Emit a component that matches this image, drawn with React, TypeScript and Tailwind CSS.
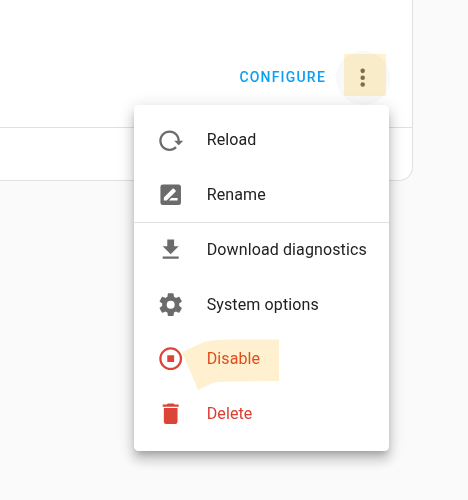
import { clsx } from "clsx";

const icons = {
  reload:
    "M2 12C2 16.97 6.03 21 11 21C13.39 21 15.68 20.06 17.4 18.4L15.9 16.9C14.63 18.25 12.86 19 11 19C4.76 19 1.64 11.46 6.05 7.05C10.46 2.64 18 5.77 18 12H15L19 16H19.1L23 12H20C20 7.03 15.97 3 11 3C6.03 3 2 7.03 2 12Z",
  rename:
    "M18,17H10.5L12.5,15H18M6,17V14.5L13.88,6.65C14.07,6.45 14.39,6.45 14.59,6.65L16.35,8.41C16.55,8.61 16.55,8.92 16.35,9.12L8.47,17M19,3H5C3.89,3 3,3.89 3,5V19A2,2 0 0,0 5,21H19A2,2 0 0,0 21,19V5C21,3.89 20.1,3 19,3Z",
  download: "M5,20H19V18H5M19,9H15V3H9V9H5L12,16L19,9Z",
  cog: "M12,15.5A3.5,3.5 0 0,1 8.5,12A3.5,3.5 0 0,1 12,8.5A3.5,3.5 0 0,1 15.5,12A3.5,3.5 0 0,1 12,15.5M19.43,12.97C19.47,12.65 19.5,12.33 19.5,12C19.5,11.67 19.47,11.34 19.43,11L21.54,9.37C21.73,9.22 21.78,8.95 21.66,8.73L19.66,5.27C19.54,5.05 19.27,4.96 19.05,5.05L16.56,6.05C16.04,5.66 15.5,5.32 14.87,5.07L14.5,2.42C14.46,2.18 14.25,2 14,2H10C9.75,2 9.54,2.18 9.5,2.42L9.13,5.07C8.5,5.32 7.96,5.66 7.44,6.05L4.95,5.05C4.73,4.96 4.46,5.05 4.34,5.27L2.34,8.73C2.21,8.95 2.27,9.22 2.46,9.37L4.57,11C4.53,11.34 4.5,11.67 4.5,12C4.5,12.33 4.53,12.65 4.57,12.97L2.46,14.63C2.27,14.78 2.21,15.05 2.34,15.27L4.34,18.73C4.46,18.95 4.73,19.03 4.95,18.95L7.44,17.94C7.96,18.34 8.5,18.68 9.13,18.93L9.5,21.58C9.54,21.82 9.75,22 10,22H14C14.25,22 14.46,21.82 14.5,21.58L14.87,18.93C15.5,18.67 16.04,18.34 16.56,17.94L19.05,18.95C19.27,19.03 19.54,18.95 19.66,18.73L21.66,15.27C21.78,15.05 21.73,14.78 21.54,14.63L19.43,12.97Z",
  stop: "M12,2A10,10 0 0,0 2,12A10,10 0 0,0 12,22A10,10 0 0,0 22,12A10,10 0 0,0 12,2M12,4C16.41,4 20,7.59 20,12C20,16.41 16.41,20 12,20C7.59,20 4,16.41 4,12C4,7.59 7.59,4 12,4M9,9V15H15V9",
  trash:
    "M19,4H15.5L14.5,3H9.5L8.5,4H5V6H19M6,19A2,2 0 0,0 8,21H16A2,2 0 0,0 18,19V7H6V19Z",
  dots: "M12,16A2,2 0 0,1 14,18A2,2 0 0,1 12,20A2,2 0 0,1 10,18A2,2 0 0,1 12,16M12,10A2,2 0 0,1 14,12A2,2 0 0,1 12,14A2,2 0 0,1 10,12A2,2 0 0,1 12,10M12,4A2,2 0 0,1 14,6A2,2 0 0,1 12,8A2,2 0 0,1 10,6A2,2 0 0,1 12,4Z",
};

function Icon({ path, className }: { path: string; className?: string }) {
  return (
    <svg viewBox="0 0 24 24" fill="currentColor" className={clsx("size-[27.4px] shrink-0", className)}>
      <path d={path} />
    </svg>
  );
}

interface MenuItemProps {
  icon: keyof typeof icons;
  label: string;
  danger?: boolean;
  highlighted?: boolean;
}

function MenuItem({ icon, label, danger, highlighted }: MenuItemProps) {
  return (
    <button
      className={clsx(
        "flex h-[54.6px] w-full items-center gap-[22.7px] pl-[22.6px] text-left",
        highlighted ? "text-[#e0501f]" : danger ? "text-[#db3c30]" : "text-[#212121]",
      )}
    >
      <Icon path={icons[icon]} className={danger ? "text-[#db4437]" : "text-[#6b6b6b]"} />
      <span className="text-[16px] leading-6 tracking-[0.12px] whitespace-nowrap">{label}</span>
    </button>
  );
}

function Menu() {
  return (
    <div className="absolute top-[104.5px] left-[134px] h-[346px] w-[255.3px] rounded-[4.5px] bg-white pt-[8.5px] shadow-[0_5px_6px_-3px_rgba(0,0,0,0.2),0_9px_11px_1px_rgba(0,0,0,0.14),0_3px_16px_2px_rgba(0,0,0,0.12)]">
      <MenuItem icon="reload" label="Reload" />
      <MenuItem icon="rename" label="Rename" />
      <div className="-mb-[0.5px] h-px bg-[#e0e0e0]" />
      <MenuItem icon="download" label="Download diagnostics" />
      <MenuItem icon="cog" label="System options" />
      <MenuItem icon="stop" label="Disable" danger highlighted />
      <MenuItem icon="trash" label="Delete" danger />
      {/* marker stroke over "Disable" */}
      <svg
        viewBox="0 0 98 52"
        className="pointer-events-none absolute top-[233.5px] left-[48px] h-[52px] w-[98px] text-[#fff1cf] mix-blend-multiply"
        fill="currentColor"
      >
        <path d="M0 14L22 4Q31 1.5 46 1.5H97V43L50 43.5Q35 43.5 31 45L16 52Z" />
      </svg>
    </div>
  );
}

export default function App() {
  return (
    <div className="relative h-[500px] w-[468px] overflow-hidden bg-[#fafafa] font-[Roboto,sans-serif]">
      <div className="flex h-[181px] w-[413px] flex-col rounded-br-[14px] border-r border-b border-[#e0e0e0] bg-white">
        <div className="flex h-[128px] items-end justify-end border-b border-[#e0e0e0] pr-[22.5px] pb-[22.5px]">
          <button className="mr-[9.5px] mb-[16px] text-[14px] leading-6 font-medium tracking-[1.2px] text-[#0b9ff0]">
            CONFIGURE
          </button>
          <div className="relative flex size-[54px] items-center justify-center rounded-full bg-[#f9f9f9]">
            <Icon path={icons.dots} className="size-[27.4px] text-[#7c7455]" />
            <div className="absolute top-[3.5px] left-[8.5px] h-[42px] w-[41.5px] bg-[#fff2cd] mix-blend-multiply" />
          </div>
        </div>
      </div>
      <Menu />
    </div>
  );
}
